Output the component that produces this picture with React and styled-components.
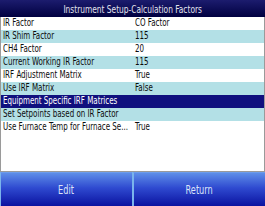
import React from 'react';
import styled, { createGlobalStyle } from 'styled-components';

const GlobalStyle = createGlobalStyle`
	html, body {
		margin: 0;
		padding: 0;
		background: #ffffff;
	}
	body {
		font-family: "DejaVu Sans Condensed", "DejaVu Sans", sans-serif;
	}
`;

const rows = [
	{ label: 'IR Factor', value: 'CO Factor' },
	{ label: 'IR Shim Factor', value: '115' },
	{ label: 'CH4 Factor', value: '20' },
	{ label: 'Current Working IR Factor', value: '115' },
	{ label: 'IRF Adjustment Matrix', value: 'True' },
	{ label: 'Use IRF Matrix', value: 'False' },
	{ label: 'Equipment Specific IRF Matrices', value: '', selected: true },
	{ label: 'Set Setpoints based on IR Factor', value: '' },
	{ label: 'Use Furnace Temp for Furnace Se...', value: 'True' },
];

export default function App() {
	return (
		<Screen>
			<GlobalStyle />
			<TitleBar>
				<Narrow $origin="center">Instrument Setup-Calculation Factors</Narrow>
			</TitleBar>
			<List>
				{rows.map((row, i) => (
					<Row key={row.label} $alt={i % 2 === 1} $selected={row.selected}>
						<Cell>
							<Narrow>{row.label}</Narrow>
						</Cell>
						<Cell>
							<Narrow>{row.value}</Narrow>
						</Cell>
					</Row>
				))}
			</List>
			<ButtonBar>
				<Button>
					<Narrow $origin="center">Edit</Narrow>
				</Button>
				<Button>
					<Narrow $origin="center">Return</Narrow>
				</Button>
			</ButtonBar>
		</Screen>
	);
}

const Screen = styled.div`
	width: 265px;
	height: 206px;
	display: flex;
	flex-direction: column;
	overflow: hidden;
	background: #ffffff;
`;

const Narrow = styled.span`
	display: inline-block;
	white-space: nowrap;
	transform: scaleX(0.79);
	transform-origin: ${p => p.$origin || 'left'} center;
`;

const TitleBar = styled.div`
	height: 17px;
	display: flex;
	align-items: center;
	justify-content: center;
	color: #e2e2ee;
	font-size: 10.5px;
	background: linear-gradient(#1c1c6e, #000040);
`;

const List = styled.div`
	flex: 1;
	border-left: 1px solid #9a9a9a;
	border-right: 1px solid #9a9a9a;
	border-bottom: 1px solid #9a9a9a;
	background: #ffffff;
`;

const Row = styled.div`
	height: 13px;
	display: grid;
	grid-template-columns: 132px 1fr;
	align-items: start;
	font-size: 10px;
	line-height: 12px;
	color: ${p => (p.$selected ? '#ffffff' : '#0c0c0c')};
	background: ${p => (p.$selected ? '#10107e' : p.$alt ? '#b3e0e6' : '#ffffff')};
`;

const Cell = styled.div`
	padding-left: 2px;
	overflow: hidden;
	white-space: nowrap;
`;

const ButtonBar = styled.div`
	height: 34px;
	display: grid;
	grid-template-columns: 132px 1fr;
	column-gap: 1px;
	background: #7ab4ec;
`;

const Button = styled.div`
	display: flex;
	align-items: center;
	justify-content: center;
	color: #dce4f8;
	font-size: 11.5px;
	background: linear-gradient(#5e8ee8, #2f4ad0 45%, #0a12a0);
	border-left: 1px solid #7ab4ec;
	border-top: 1px solid #6c9cec;
`;
